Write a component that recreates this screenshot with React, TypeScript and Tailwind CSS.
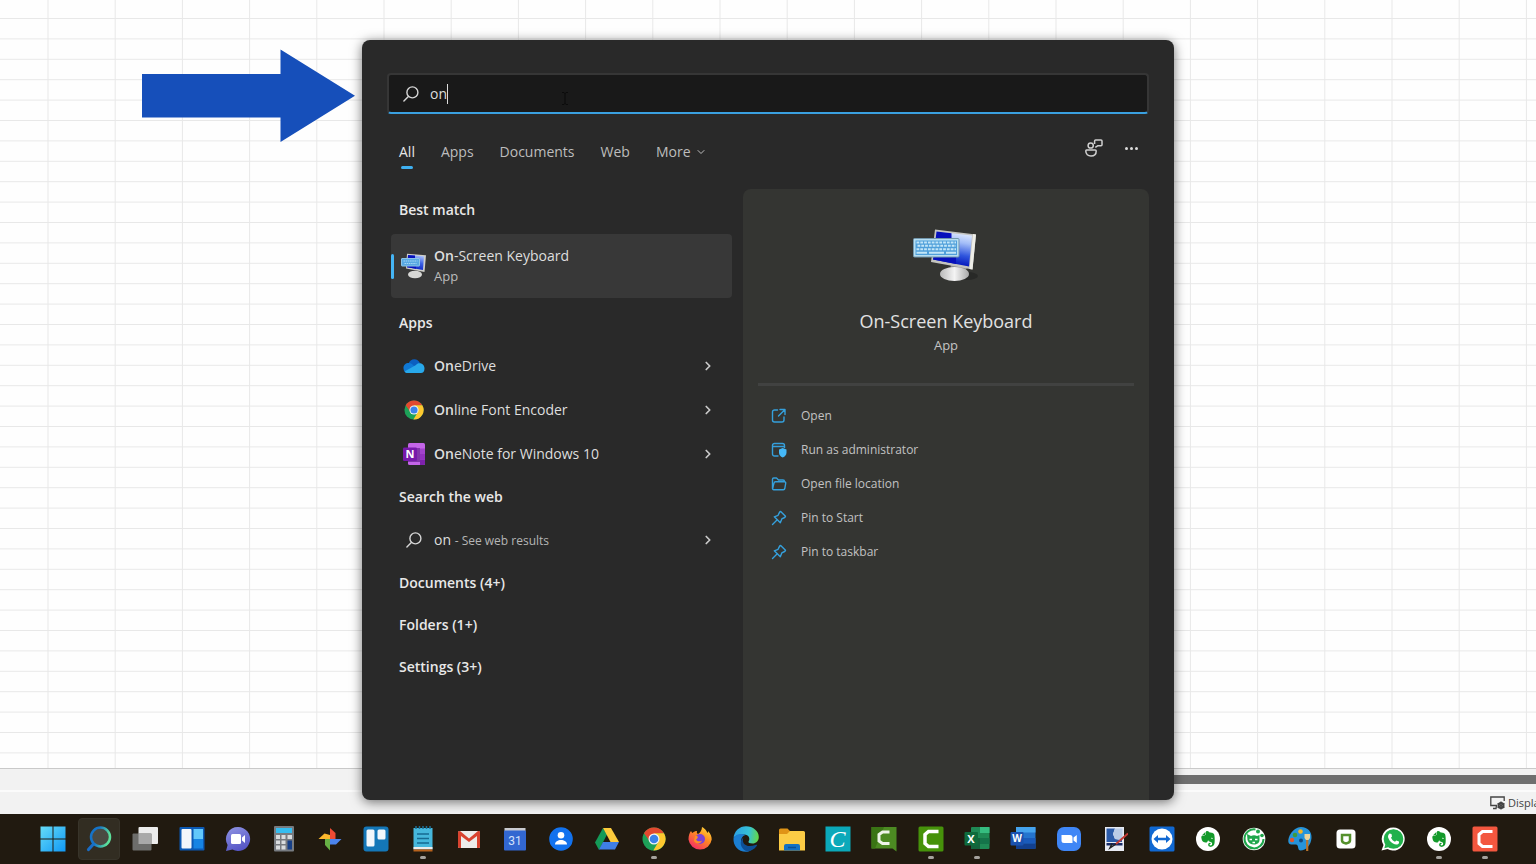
import { useState } from 'react';
import type { ReactNode } from 'react';
import { ChevronDown, ChevronRight } from 'lucide-react';
import { FaEvernote, FaWhatsapp } from 'react-icons/fa';

/* ---------- Small line icons ---------- */

function SearchIcon() {
  return (
    <svg width="16" height="16" viewBox="0 0 16 16" fill="none" stroke="#d6d6d6" strokeWidth="1.4" strokeLinecap="round">
      <circle cx="9.4" cy="6.4" r="5.5" />
      <path d="M5.4 10.4 L0.9 15" />
    </svg>
  );
}

function ChatPersonIcon() {
  return (
    <svg width="18" height="18" viewBox="0 0 18 18" fill="none" stroke="#d0d0d0" strokeWidth="1.5" strokeLinejoin="round">
      <circle cx="5.7" cy="6.5" r="2.6" />
      <path d="M1.6 11 H10.2 a1 1 0 0 1 1 1 C11.2 15.300 9 17 6 17 C3 17 .8 15.300 .8 12 a1 1 0 0 1 .8 -1Z" />
      <path d="M9.600 5 V2 a1 1 0 0 1 1 -1 H16 a1 1 0 0 1 1 1 V5.800 a1 1 0 0 1 -1 1 H12.600 L10.300 8.300" />
    </svg>
  );
}

function OpenIcon() {
  return (
    <svg width="16" height="16" viewBox="0 0 16 16" fill="none" stroke="#35a0dc" strokeWidth="1.4" strokeLinecap="round" strokeLinejoin="round">
      <path d="M6.500 2 H3.500 a2 2 0 0 0 -2 2 V12 a2 2 0 0 0 2 2 H11 a2 2 0 0 0 2 -2 V9" />
      <path d="M9 1.500 H14 V6.500 M13.800 1.700 L7.500 8" />
    </svg>
  );
}

function AdminIcon() {
  return (
    <svg width="16" height="16" viewBox="0 0 16 16" fill="none" stroke="#35a0dc" strokeWidth="1.4">
      <path d="M7.500 14 H3.500 a2 2 0 0 1 -2 -2 V3.500 a2 2 0 0 1 2 -2 H11.500 a2 2 0 0 1 2 2 V6 M1.500 4.500 H13.500" />
      <path d="M11.700 6 L15.500 7.500 V10.500 C15.500 13 14 14.600 11.700 15.500 C9.400 14.600 8 13 8 10.500 V7.500Z" fill="#45b8f8" stroke="none" />
    </svg>
  );
}

function FolderIcon() {
  return (
    <svg width="16" height="16" viewBox="0 0 16 16" fill="none" stroke="#35a0dc" strokeWidth="1.4" strokeLinejoin="round">
      <path d="M1.500 12.500 V3.200 a1.200 1.200 0 0 1 1.200 -1.200 H5.500 L7.500 4 H12 a1.500 1.500 0 0 1 1.500 1.500" />
      <path d="M4.500 5.800 H13.500 a1.200 1.200 0 0 1 1.200 1.500 L13.800 12.500 a1.500 1.500 0 0 1 -1.500 1.200 H2.800 a1.200 1.200 0 0 1 -1.200 -1.500 L3 7 a1.500 1.500 0 0 1 1.500 -1.200Z" />
    </svg>
  );
}

function PinIcon() {
  return (
    <svg width="16" height="16" viewBox="0 0 16 16" fill="none" stroke="#35a0dc" strokeWidth="1.4" strokeLinecap="round" strokeLinejoin="round">
      <path d="M9.700 1.500 L14.500 6.300 C14.500 7 14.200 7.200 13.600 7.500 L10.800 8.900 L9.300 12.800 L3.300 6.800 L7.100 5.300 L8.500 2.400 C8.800 1.800 9.100 1.500 9.700 1.500Z" />
      <path d="M6 10 L1.500 14.500" />
    </svg>
  );
}

/* ---------- App logos ---------- */

function KeyboardAppIcon() {
  return (
    <svg className="h-[54px] w-[66px]" viewBox="0 0 66 54">
      <defs>
        <linearGradient id="screen" x1="0.700" y1="0" x2="0.500" y2="1">
          <stop offset="0" stopColor="#e6efff" />
          <stop offset="0.300" stopColor="#a3bdf8" />
          <stop offset="0.650" stopColor="#2f55dd" />
          <stop offset="0.900" stopColor="#0a1fc0" />
        </linearGradient>
        <linearGradient id="base" x1="0" y1="0" x2="1" y2="0">
          <stop offset="0" stopColor="#b9b9b9" />
          <stop offset="0.500" stopColor="#f4f4f4" />
          <stop offset="1" stopColor="#a8a8a8" />
        </linearGradient>
      </defs>
      <ellipse cx="54" cy="47" rx="11" ry="4" fill="#1f1f1f" opacity="0.550" />
      <path d="M38 34 L54 38 L52 44 H37Z" fill="#8f9090" />
      <ellipse cx="41.500" cy="45" rx="14.500" ry="7" fill="url(#base)" />
      <path d="M22 .5 L63 5.500 L59.500 40.500 L18 33Z" fill="#c4c4c0" />
      <path d="M60 5 L63 5.500 L59.500 40.500 L56.500 39.900Z" fill="#eeeee8" />
      <path d="M23.500 2.500 L59 6.500 L56 37.500 L20 30.500Z" fill="url(#screen)" />
      <path d="M23.500 2.500 L38.500 4.300 V11 H22.500Z M21 28 H43 V34.900 L20 30.500Z" fill="#0710bb" />
      <rect x="0.500" y="9.500" width="45.500" height="18.500" rx="1" fill="#b6def2" stroke="#7297ad" />
      <rect x="2.500" y="11.500" width="41.500" height="14.500" fill="#4f9fda" />
      <path d="M3.500 13.500 H43 M4.500 16.800 H43 M3.500 20.200 H43" stroke="#c3e6f8" strokeWidth="2" strokeDasharray="2.800 1" />
      <path d="M3.500 23.700 H14 M16 23.700 H31 M33 23.700 H43" stroke="#c3e6f8" strokeWidth="2" />
    </svg>
  );
}

function KeyboardAppIconSmall() {
  return (
    <svg width="26" height="26" viewBox="0 0 26 26">
      <defs>
        <linearGradient id="screen-small" x1="0.800" y1="0" x2="0.500" y2="1">
          <stop offset="0" stopColor="#b4caff" />
          <stop offset="0.500" stopColor="#3c62e6" />
          <stop offset="1" stopColor="#0a1fc0" />
        </linearGradient>
      </defs>
      <ellipse cx="14" cy="21.500" rx="7" ry="3.800" fill="#d8d8d6" />
      <path d="M6 .8 L25 2.200 L23.500 19 L5 15.500Z" fill="#cfcfca" />
      <path d="M7 2 L23 3.300 L22 17 L6 14.300Z" fill="url(#screen-small)" />
      <path d="M7 2 L14 2.600 V5.500 H6.800Z M7 12 H15 V15.800 L6 14.300Z" fill="#0710bb" />
      <rect x="0.500" y="5.500" width="18" height="7.500" rx="0.500" fill="#58a8e2" stroke="#8cc4e6" />
      <path d="M2.500 8 H16.500 M3.500 10.500 H15.500" stroke="#a5d6f4" strokeDasharray="1.500 0.700" />
    </svg>
  );
}

function OneDriveIcon() {
  return (
    <svg width="22" height="22" viewBox="0 0 22 22">
      <path d="M5.500 9 C6.500 3.500 14.500 2 17 8 L13 13 L4 10Z" fill="#0b5fc0" />
      <path d="M.5 13.500 C0 8.500 5.500 6.500 9 9 L15 15 L4.500 18 C2.500 18 .5 16 .5 13.500Z" fill="#0f78d4" />
      <path d="M13 10 C15 7 21.500 8 21.500 13.500 C21.500 16.500 20 18 18 18 H4.500 C3.500 18 2.400 17.500 1.500 16.500Z" fill="#28a8ea" />
    </svg>
  );
}

function ChromeIcon({ className }: { className: string }) {
  return (
    <svg className={className} viewBox="0 0 24 24">
      <circle cx="12" cy="12" r="11.500" fill="#1da158" />
      <path d="M2 6.300 A11.500 11.500 0 0 1 22 6.300 L12 7 L7.500 14Z" fill="#e2492f" />
      <path d="M22 6.300 A11.500 11.500 0 0 1 11.300 23.500 L16.600 14.500 L12 6.300Z" fill="#fdc82f" />
      <circle cx="12" cy="12" r="5.500" fill="#f5f5f5" />
      <circle cx="12" cy="12" r="4.300" fill="#3b82ea" />
    </svg>
  );
}

function OneNoteIcon() {
  return (
    <svg width="22" height="22" viewBox="0 0 22 22">
      <rect x="5" y="0" width="17" height="22" rx="1.500" fill="#c465e8" />
      <rect x="17" y="5.500" width="5" height="5.500" fill="#a343cc" />
      <rect x="17" y="11" width="5" height="5.500" fill="#9332bf" />
      <path d="M17 16.500 H22 V20.500 a1.500 1.500 0 0 1 -1.500 1.500 H17Z" fill="#7e22ac" />
      <rect x="5" y="5" width="12" height="14" fill="#571580" opacity="0.600" />
      <rect x="0" y="4.500" width="14" height="13.500" rx="1.300" fill="#7719aa" />
      <text x="7" y="15" textAnchor="middle" fontSize="11" fontWeight="700" fontFamily="Open Sans, sans-serif" fill="#fff">N</text>
    </svg>
  );
}

function Glyph({ children }: { children: ReactNode }) {
  return (
    <svg width="26" height="26" viewBox="0 0 26 26">
      {children}
    </svg>
  );
}

function EvernoteBadge() {
  return (
    <span className="flex h-6 w-6 items-center justify-center rounded-full bg-white">
      <FaEvernote size={18} color="#149a2b" />
    </span>
  );
}

interface TaskbarApp {
  name: string;
  icon: ReactNode;
  active?: boolean;
  running?: boolean;
}

const taskbarApps: TaskbarApp[] = [
  {
    name: 'Start',
    icon: (
      <Glyph>
        <defs>
          <linearGradient id="win" x1="0" y1="0" x2="1" y2="1">
            <stop offset="0" stopColor="#66dcf8" />
            <stop offset="1" stopColor="#1098f5" />
          </linearGradient>
        </defs>
        <path d="M.5 .5 H12.500 V12.500 H.5Z M13.500 .5 H25.500 V12.500 H13.500Z M.5 13.500 H12.500 V25.500 H.5Z M13.500 13.500 H25.500 V25.500 H13.500Z" fill="url(#win)" />
      </Glyph>
    ),
  },
  {
    name: 'Search',
    active: true,
    icon: (
      <Glyph>
        <defs>
          <linearGradient id="lens" x1="0" y1="0" x2="1" y2="0.300">
            <stop offset="0.400" stopColor="#1573c8" />
            <stop offset="1" stopColor="#5be09a" />
          </linearGradient>
        </defs>
        <path d="M8 17.500 L2.500 23.500" stroke="#1a6cc4" strokeWidth="3.200" strokeLinecap="round" />
        <circle cx="14.500" cy="11" r="9.500" fill="#4a4a42" stroke="url(#lens)" strokeWidth="2.500" />
      </Glyph>
    ),
  },
  {
    name: 'Task View',
    icon: (
      <Glyph>
        <rect x="6.500" y="1" width="19.500" height="17" rx="1" fill="#ececec" />
        <rect x="0.500" y="7.500" width="19" height="17" rx="1" fill="#6d6d6b" />
        <rect x="6.500" y="7.500" width="13" height="10.500" fill="#a9a9a9" />
      </Glyph>
    ),
  },
  {
    name: 'Widgets',
    icon: (
      <Glyph>
        <rect x="0.500" y="1" width="25" height="23.500" rx="1" fill="#0b59b5" />
        <rect x="2.500" y="3" width="10" height="19.500" rx="1" fill="#f4f7fb" />
        <rect x="14.500" y="3" width="9.500" height="10" fill="#62c8fb" />
        <rect x="14.500" y="13" width="9.500" height="9.500" fill="#1684e4" />
      </Glyph>
    ),
  },
  {
    name: 'Chat',
    icon: (
      <Glyph>
        <defs>
          <linearGradient id="chat" x1="0.300" y1="0" x2="0.700" y2="1">
            <stop offset="0" stopColor="#8a8ee0" />
            <stop offset="1" stopColor="#5251c4" />
          </linearGradient>
        </defs>
        <path d="M13 1 A12 12 0 1 1 7.500 23.600 L1 25 L2.600 19 A12 12 0 0 1 13 1Z" fill="url(#chat)" />
        <rect x="6" y="8" width="10" height="10" rx="1.500" fill="#fff" />
        <path d="M17 11.500 L20 9 V17 L17 14.500Z" fill="#fff" />
      </Glyph>
    ),
  },
  {
    name: 'Calculator',
    icon: (
      <Glyph>
        <rect x="3" y="0" width="20" height="25.500" rx="1" fill="#777b80" />
        <rect x="5" y="2" width="16" height="5" fill="#35bdf0" />
        <path d="M5 9 H9 V13 H5Z M10.500 9 H14.500 V13 H10.500Z M16.500 9 H21 V13 H16.500Z M5 14.500 H9 V18 H5Z M10.500 14.500 H14.500 V18 H10.500Z M5 19.500 H9 V23.500 H5Z M10.500 19.500 H14.500 V23.500 H10.500Z" fill="#d9dcde" />
        <rect x="16.500" y="14.500" width="4.500" height="9" fill="#163f87" />
      </Glyph>
    ),
  },
  {
    name: 'Photos',
    icon: (
      <Glyph>
        <path d="M13 13 V2 L18.500 7 V13Z" fill="#ee4b35" />
        <path d="M13 13 H24.500 L19 18.500 H13Z" fill="#4b84ee" />
        <path d="M13 13 V24.500 L8 19 V13Z" fill="#67b045" />
        <path d="M13 13 H1.500 L7.500 7.500 L13 9Z" fill="#fbb72c" />
      </Glyph>
    ),
  },
  {
    name: 'Trello',
    icon: (
      <Glyph>
        <rect x="0.500" y="0.500" width="25" height="25" rx="3" fill="#1477b8" />
        <rect x="3.500" y="3.500" width="8" height="17" rx="1.500" fill="#f2f7fb" />
        <rect x="14.500" y="3.500" width="8" height="10" rx="1.500" fill="#f2f7fb" />
      </Glyph>
    ),
  },
  {
    name: 'Notepad',
    running: true,
    icon: (
      <Glyph>
        <rect x="3.500" y="2" width="19" height="21" fill="#46b7dc" />
        <path d="M6 0 V3 M9.500 0 V3 M13 0 V3 M16.500 0 V3 M20 0 V3" stroke="#1b6f94" strokeWidth="1.500" />
        <path d="M7 8 H19 M7 12.500 H19 M7 17 H19" stroke="#166a91" strokeWidth="1.500" />
        <rect x="3.500" y="21" width="19" height="2.500" fill="#ececec" />
        <rect x="3.500" y="23.500" width="19" height="2" fill="#b8621c" />
      </Glyph>
    ),
  },
  {
    name: 'Gmail',
    icon: (
      <Glyph>
        <rect x="2" y="5" width="22" height="17" rx="1.500" fill="#ececea" />
        <path d="M2 7 V20.500 a1.500 1.500 0 0 0 1.500 1.500 H5 V10 L13 16 L21 10 V22 H22.500 a1.500 1.500 0 0 0 1.500 -1.500 V6.500 a1.500 1.500 0 0 0 -2 -1.500 L13 12.500 L4 5 a1.500 1.500 0 0 0 -2 1.500Z" fill="#d8432f" />
      </Glyph>
    ),
  },
  {
    name: 'Calendar',
    icon: (
      <Glyph>
        <rect x="2.500" y="2" width="21" height="4" fill="#c9cbd0" />
        <rect x="2" y="4.500" width="22" height="20" rx="1" fill="#3267d1" />
        <text x="13" y="19" textAnchor="middle" fontSize="12" fontFamily="Roboto, sans-serif" fill="#d5e2fb">31</text>
      </Glyph>
    ),
  },
  {
    name: 'Contacts',
    icon: (
      <Glyph>
        <circle cx="13" cy="13" r="11.800" fill="#1272ee" />
        <circle cx="13" cy="9.300" r="3.300" fill="#fff" />
        <path d="M7 18.500 C7 12.500 19 12.500 19 18.500Z" fill="#fff" />
      </Glyph>
    ),
  },
  {
    name: 'Drive',
    icon: (
      <Glyph>
        <path d="M9 2 L13 8.500 L5 24 L1 16.500Z" fill="#149a58" />
        <path d="M9 2 H17 L25 16 H16.500Z" fill="#fccb3c" />
        <path d="M9 16 H25 L21 23.500 H5Z" fill="#3f7fe6" />
      </Glyph>
    ),
  },
  { name: 'Chrome', running: true, icon: <ChromeIcon className="h-6 w-6" /> },
  {
    name: 'Firefox',
    icon: (
      <Glyph>
        <defs>
          <linearGradient id="fox" x1="0.900" y1="0" x2="0.200" y2="1">
            <stop offset="0" stopColor="#ffe03d" />
            <stop offset="0.450" stopColor="#ff8a22" />
            <stop offset="1" stopColor="#f5266a" />
          </linearGradient>
        </defs>
        <path d="M15 1 C19 3 20 6 20.500 7 C21 6.500 21 6 21 5 C24 8 24.700 11 24.700 13.500 A11.700 11.500 0 0 1 1.500 13.500 C1.500 9.500 2.500 7 4 5 C4.500 6 5 6.500 5.500 7 C7 5.500 8.500 5 10 5 C9.500 6.500 10 7.500 11 8 C13 7 15 4 15 1Z" fill="url(#fox)" />
        <circle cx="13" cy="13" r="5" fill="#7b43d6" />
        <path d="M8 10 C11 9 12 12 9 13.500 C10 15.500 13 16 15 14.500 C14 18 9 18.500 7 15Z" fill="#ff8f25" />
      </Glyph>
    ),
  },
  {
    name: 'Edge',
    icon: (
      <Glyph>
        <defs>
          <linearGradient id="edge" x1="0" y1="0.300" x2="1" y2="0.400">
            <stop offset="0" stopColor="#2d9fe3" />
            <stop offset="0.600" stopColor="#35c1d8" />
            <stop offset="1" stopColor="#63d948" />
          </linearGradient>
        </defs>
        <path d="M.5 12.500 C1 5 6.500 .2 13 .2 C20 .2 25.800 5 25.800 11 C25.800 15 23 17.500 19.500 17.500 C16.500 17.500 15 16.500 15.500 15.500 C17.500 13 16 8.500 11 8.500 C6 8.500 1 10 .5 12.500Z" fill="url(#edge)" />
        <path d="M.5 12.500 C2 8 9 7 12.500 9 C9 10 7.500 13 8.500 17 C9.500 21.500 14 24.500 18 24.500 C16 25.500 14.500 25.800 13 25.800 C5 25.800 0 19.500 .5 12.500Z" fill="#1b7ed2" />
        <path d="M10.500 11.500 C8 17 13 22.500 22.500 19 C24 18.500 24.300 19 23.700 20 C21 24 16 26 13 25 C7 22 6 15 10.500 11.500Z" fill="#0d4f96" />
      </Glyph>
    ),
  },
  {
    name: 'File Explorer',
    icon: (
      <Glyph>
        <path d="M0 4 a1.500 1.500 0 0 1 1.500 -1.500 H8.500 L11 5 H17 V9 H0Z" fill="#e09416" />
        <path d="M0 8 H8 L11 5 H24.500 a1.500 1.500 0 0 1 1.500 1.500 V24.500 H0Z" fill="#fccc45" />
        <path d="M5 24.500 V20 a2 2 0 0 1 2 -2 H19 a2 2 0 0 1 2 2 V24.500Z" fill="#1471c4" />
        <path d="M9 21.500 H17" stroke="#0b4f94" strokeWidth="1.500" />
      </Glyph>
    ),
  },
  {
    name: 'Cricut',
    icon: (
      <Glyph>
        <rect x="0.500" y="0.500" width="25" height="25" fill="#0ba9ba" />
        <text x="12.500" y="21" textAnchor="middle" fontSize="24" fontStyle="italic" fontFamily="Liberation Serif, serif" fill="#fff">C</text>
      </Glyph>
    ),
  },
  {
    name: 'Camtasia 9',
    icon: (
      <Glyph>
        <path d="M.5 1 H25.500 V25.500 L21.500 22.500 H.5Z" fill="#4c8a22" />
        <path d="M.5 1 H13 L4 22.500 H.5Z" fill="#3a7414" />
        <path d="M18.500 6 H11.500 L8 8.500 V15 L11.500 17.500 H18.500" fill="none" stroke="#eef4e8" strokeWidth="3" />
      </Glyph>
    ),
  },
  {
    name: 'Camtasia',
    running: true,
    icon: (
      <Glyph>
        <rect x="0.500" y="0.500" width="25" height="25" rx="1.500" fill="#46920a" />
        <path d="M20.500 5.500 H10.500 L7 8.500 V17.500 L10.500 20.500 H20.500" fill="none" stroke="#fff" strokeWidth="3.500" />
      </Glyph>
    ),
  },
  {
    name: 'Excel',
    running: true,
    icon: (
      <Glyph>
        <rect x="7" y="1" width="18.500" height="22" rx="1" fill="#1f8a55" />
        <path d="M16 1 H25.500 V7 H16Z" fill="#36bd80" />
        <path d="M7 12 H16 V23 H7Z" fill="#14633c" />
        <path d="M16 12 H25.500 V18 H16Z" fill="#15744a" />
        <rect x="0.500" y="6" width="13.500" height="13.500" rx="1" fill="#0f6b3c" />
        <text x="7" y="17" textAnchor="middle" fontSize="11" fontWeight="700" fontFamily="Open Sans, sans-serif" fill="#fff">X</text>
      </Glyph>
    ),
  },
  {
    name: 'Word',
    icon: (
      <Glyph>
        <rect x="6" y="1" width="19.500" height="22" rx="1" fill="#2474ce" />
        <path d="M6 1 H25.500 V6.500 H6Z" fill="#45a3ed" />
        <path d="M6 12 H25.500 V17.500 H6Z" fill="#1a5bbb" />
        <path d="M6 17.500 H25.500 V23 H6Z" fill="#12408f" />
        <rect x="0.500" y="6" width="13" height="13.500" rx="1" fill="#1a52b0" />
        <text x="7" y="16" textAnchor="middle" fontSize="10" fontWeight="700" fontFamily="Open Sans, sans-serif" fill="#fff">W</text>
      </Glyph>
    ),
  },
  {
    name: 'Zoom',
    icon: (
      <Glyph>
        <rect x="1" y="1" width="24" height="24" rx="7" fill="#3f86f6" />
        <path d="M5.500 9 H14 a2.500 2.500 0 0 1 2.500 2.500 V17 H8 a2.500 2.500 0 0 1 -2.500 -2.500Z M17.500 11.500 L20.800 9 V17 L17.500 14.500Z" fill="#fff" />
      </Glyph>
    ),
  },
  {
    name: 'Photo Editor',
    icon: (
      <Glyph>
        <rect x="3" y="1" width="19" height="24" fill="#e7eaf2" />
        <path d="M4.500 2.500 H13 L11 8 L13 13 L20 14 V16 H4.500Z" fill="#2b5ba9" />
        <path d="M13 2.500 H20.500 V14 L13 13 L11 8Z" fill="#b9cbe6" />
        <path d="M4.500 17 H20.500 V19.500 H4.500Z" fill="#162a66" />
        <path d="M26 7.500 L14 18" stroke="#c33a34" strokeWidth="2" />
        <path d="M14 18 L8 22 L10 17.500" fill="none" stroke="#222" strokeWidth="1.500" />
      </Glyph>
    ),
  },
  {
    name: 'TeamViewer',
    icon: (
      <Glyph>
        <rect x="0.500" y="0.500" width="25" height="25" rx="1.500" fill="#1068d2" />
        <circle cx="13" cy="13" r="10.500" fill="#fff" />
        <path d="M4.500 13 L9 9 V11.800 H17 V9 L21.500 13 L17 17 V14.200 H9 V17Z" fill="#1068d2" />
      </Glyph>
    ),
  },
  { name: 'Evernote', icon: <EvernoteBadge /> },
  {
    name: 'Cookie',
    icon: (
      <Glyph>
        <circle cx="13" cy="13" r="11.300" fill="#fff" />
        <path d="M14.500 3.500 A9.500 9.500 0 1 0 22.500 13" fill="none" stroke="#1ea64b" strokeWidth="2" />
        <path d="M6 8 L10 10 C12 9 14 9 16 10 L18.500 9 V14 C18.500 20 8 20 6.500 14Z" fill="#1ea64b" />
        <path d="M8.500 13.500 H11 M14 13.500 H16.500 M11.500 16.500 H14" stroke="#fff" strokeWidth="1.300" />
        <circle cx="17" cy="5.500" r="2" fill="#1ea64b" />
        <circle cx="21" cy="9.500" r="1.800" fill="#1ea64b" />
      </Glyph>
    ),
  },
  {
    name: 'Paint',
    icon: (
      <Glyph>
        <path d="M14 1 C21 1 25 6 24.500 12 C24 19 19 24.500 13.500 24.500 C11 24.500 11.500 21.500 10.500 19.500 C9.500 17.500 7 19 4 18.500 C0 18 1 12 3.500 8 C6 4 10 1 14 1Z" fill="#2694da" />
        <circle cx="8" cy="9" r="2.300" fill="#3f9a3d" />
        <circle cx="13.500" cy="5.500" r="2.300" fill="#f5b524" />
        <circle cx="5" cy="14" r="2.200" fill="#e3552c" />
        <circle cx="14" cy="14.500" r="2" fill="#134a80" />
        <path d="M17.500 8 H23 V12 L21.500 14 H19 L17.500 12Z" fill="#ecd39a" />
        <path d="M20.200 14 V25" stroke="#b9742b" strokeWidth="2.200" />
      </Glyph>
    ),
  },
  {
    name: 'Shield',
    icon: (
      <Glyph>
        <rect x="3.500" y="3.500" width="19" height="19" rx="3.500" fill="#fff" />
        <path d="M9 9 H17 V14.500 C17 16 15.500 17 13 17.500 C10.500 17 9 16 9 14.500Z" fill="none" stroke="#55902c" strokeWidth="2.500" />
      </Glyph>
    ),
  },
  {
    name: 'WhatsApp',
    icon: (
      <Glyph>
        <path d="M13.500 1.500 A11.500 11.500 0 1 1 7.500 23 L1.500 24.500 L3.500 19 A11.500 11.500 0 0 1 13.500 1.500Z" fill="#fff" />
        <circle cx="13.500" cy="13" r="9.800" fill="#22b14c" />
        <FaWhatsapp x="3" y="2.500" size={21} color="#22b14c" />
        <path d="M9.500 7.500 L11.500 8 L12 10.500 L11 11.800 C12 13.800 13 14.800 15 15.800 L16.300 14.500 L19 15.500 V17 C18 19 15.500 19 13 17.500 C10.500 16 8.500 13.500 8 11 C8 9.500 8.500 8.200 9.500 7.500Z" fill="#fff" />
      </Glyph>
    ),
  },
  { name: 'Evernote Helper', running: true, icon: <EvernoteBadge /> },
  {
    name: 'Camtasia Recorder',
    running: true,
    icon: (
      <Glyph>
        <rect x="0.500" y="0.500" width="25" height="25" rx="1.500" fill="#f3573f" />
        <path d="M20.500 5.500 H10.500 L7 8.500 V17.500 L10.500 20.500 H20.500" fill="none" stroke="#fff" strokeWidth="3" />
      </Glyph>
    ),
  },
];

/* ---------- Search results ---------- */

const tabs = ['All', 'Apps', 'Documents', 'Web'];

const appResults = [
  { match: 'On', rest: 'eDrive', icon: <OneDriveIcon /> },
  { match: 'On', rest: 'line Font Encoder', icon: <ChromeIcon className="h-5 w-5" /> },
  { match: 'On', rest: 'eNote for Windows 10', icon: <OneNoteIcon /> },
];

const moreGroups = ['Documents (4+)', 'Folders (1+)', 'Settings (3+)'];

const actions = [
  { label: 'Open', icon: <OpenIcon /> },
  { label: 'Run as administrator', icon: <AdminIcon /> },
  { label: 'Open file location', icon: <FolderIcon /> },
  { label: 'Pin to Start', icon: <PinIcon /> },
  { label: 'Pin to taskbar', icon: <PinIcon /> },
];

function GroupHeading({ children }: { children: ReactNode }) {
  return <h2 className="flex h-[42px] items-center pl-2 text-sm font-semibold text-[#e8e8e8]">{children}</h2>;
}

function ResultRow({ icon, children }: { icon: ReactNode; children: ReactNode }) {
  return (
    <button className="flex h-11 w-full items-center pr-[17px] pl-3 text-left text-sm font-medium text-[#dedede]">
      <span className="mr-[9px] flex w-[22px] shrink-0 justify-center">{icon}</span>
      <span className="flex-1">{children}</span>
      <ChevronRight size={14} strokeWidth={3} color="#c9c9c9" />
    </button>
  );
}

function SearchPanel() {
  const [query, setQuery] = useState('on');
  const [tab, setTab] = useState('All');

  return (
    <section className="absolute top-10 bottom-16 left-1/2 flex w-[812px] -translate-x-1/2 flex-col rounded-lg bg-[#292929] px-[25px] pt-[33px] shadow-[0_2px_12px_rgba(0,0,0,0.55)]">
      {/* Callout arrow */}
      <svg className="absolute top-[9px] right-full mr-[7px]" width="213" height="93" viewBox="0 0 213 93">
        <path d="M0 25 H138.500 V.5 L213 46.700 L138.500 93 V68.500 H0Z" fill="#164fba" />
      </svg>

      {/* Search box */}
      <label className="relative flex h-[41px] shrink-0 items-center rounded border-2 border-[#363636] border-b-[#3aa0e0] bg-[#191919] pl-[14px]">
        <SearchIcon />
        <input
          type="text"
          aria-label="Search"
          value={query}
          onChange={(e) => setQuery(e.target.value)}
          className="ml-[11px] field-sizing-content bg-transparent text-sm font-medium text-[#dcdcdc] outline-none"
        />
        <span className="h-5 w-px bg-[#dcdcdc]" />
        <svg className="absolute top-[17px] left-[172px]" width="8" height="13" viewBox="0 0 8 13" fill="none" stroke="#0b0b0b">
          <path d="M1 .5 H3 L4 1.500 L5 .5 H7 M4 1.500 V11.500 M1 12.500 H3 L4 11.500 L5 12.500 H7" />
        </svg>
      </label>

      {/* Filter tabs */}
      <div className="flex h-[75px] shrink-0 items-start justify-between pr-[11px] pl-3">
        <nav className="flex gap-[26px] pt-7 text-sm font-medium text-[#bdbdbd]">
          {tabs.map((name) => (
            <button
              key={name}
              onClick={() => setTab(name)}
              className={`flex flex-col items-center ${name === tab ? 'text-[#e6e6e6]' : ''}`}
            >
              {name}
              {name === tab && <span className="mt-1 h-[3px] w-3 rounded-full bg-[#3fb0f0]" />}
            </button>
          ))}
          <button className="flex h-5 items-center gap-1">
            More
            <ChevronDown size={12} />
          </button>
        </nav>
        <div className="flex items-center gap-[22px] pt-[25px]">
          <button aria-label="Chat">
            <ChatPersonIcon />
          </button>
          <button aria-label="Options" className="flex gap-[2px]">
            <span className="h-[3px] w-[3px] rounded-full bg-[#dcdcdc]" />
            <span className="h-[3px] w-[3px] rounded-full bg-[#dcdcdc]" />
            <span className="h-[3px] w-[3px] rounded-full bg-[#dcdcdc]" />
          </button>
        </div>
      </div>

      <div className="flex min-h-0 flex-1 gap-[11px]">
        {/* Results */}
        <div className="w-[345px] pl-1">
          <GroupHeading>Best match</GroupHeading>
          <button className="mt-[3px] mb-1 flex h-16 w-full items-center gap-[7px] rounded bg-[#383838] text-left font-medium">
            <span className="h-[25px] w-[3px] rounded-full bg-[#45b5f5]" />
            <KeyboardAppIconSmall />
            <span>
              <span className="block text-sm leading-5 text-[#dedede]">
                <b className="font-semibold">On</b>-Screen Keyboard
              </span>
              <span className="block text-[13px] leading-5 text-[#bdbdbd]">App</span>
            </span>
          </button>

          <GroupHeading>Apps</GroupHeading>
          {appResults.map((app) => (
            <ResultRow key={app.rest} icon={app.icon}>
              <b className="font-semibold">{app.match}</b>
              {app.rest}
            </ResultRow>
          ))}

          <GroupHeading>Search the web</GroupHeading>
          <ResultRow icon={<SearchIcon />}>
            on <span className="text-xs text-[#b5b5b5]">- See web results</span>
          </ResultRow>

          {moreGroups.map((group) => (
            <GroupHeading key={group}>{group}</GroupHeading>
          ))}
        </div>

        {/* Details */}
        <div className="flex-1 rounded-t-lg bg-[#343532] px-[15px] pt-10">
          <div className="flex flex-col items-center font-medium">
            <KeyboardAppIcon />
            <h1 className="mt-6 text-lg leading-7 text-[#e2e2e2]">On-Screen Keyboard</h1>
            <p className="text-[13px] leading-5 text-[#c4c4c4]">App</p>
          </div>
          <hr className="mt-7 mb-[13px] border-t-3 border-[#414241]" />
          {actions.map((action) => (
            <button key={action.label} className="flex h-[34px] w-full items-center gap-[14px] pl-[13px] text-xs font-medium text-[#c2c2c2]">
              {action.icon}
              {action.label}
            </button>
          ))}
        </div>
      </div>
    </section>
  );
}

/* ---------- Desktop ---------- */

function Spreadsheet() {
  return (
    <svg className="min-h-0 w-full flex-1 bg-[#fefefe]" aria-hidden="true">
      <defs>
        <pattern id="cells" x="47.500" y="18" width="67.200" height="20.400" patternUnits="userSpaceOnUse">
          <path d="M0 .5 H67.200 M.5 0 V20.400" stroke="#e8e8e8" />
        </pattern>
      </defs>
      <rect width="100%" height="100%" fill="url(#cells)" />
    </svg>
  );
}

function StatusBar() {
  return (
    <footer className="h-[46px] shrink-0 overflow-hidden border-t border-[#c9c9c9] bg-[#f2f2f2] pt-[6px]">
      <div className="ml-auto h-[9px] w-1/2 bg-[#6e6e6e]" />
      <div className="mt-[6px] h-[2px] bg-[#fbfbfb]" />
      <div className="flex h-[22px] justify-end">
        <button className="flex w-[46px] items-center gap-[3px] overflow-hidden text-[11px] whitespace-nowrap text-[#444]">
          <svg className="shrink-0" width="15" height="14" viewBox="0 0 15 14" fill="none" stroke="#444" strokeWidth="1.300">
            <path d="M7 9.500 H.8 V1 H14.200 V5 M3 12.500 H6 L6.500 9.500" />
            <circle cx="11" cy="9.500" r="2.500" strokeWidth="2" />
            <path d="M11 5.500 V13.500 M7.500 7.500 L14.500 11.500 M7.500 11.500 L14.500 7.500" />
          </svg>
          Display
        </button>
      </div>
    </footer>
  );
}

function Taskbar() {
  return (
    <nav className="flex h-[50px] shrink-0 items-stretch bg-[#211a10] pr-7 pl-[30px]">
      {taskbarApps.map((app) => (
        <button key={app.name} aria-label={app.name} className="relative flex flex-1 items-center justify-center">
          <span
            className={`flex h-[42px] w-[42px] items-center justify-center rounded ${
              app.active ? 'border border-[#38342a] bg-[#322d22]' : ''
            }`}
          >
            {app.icon}
          </span>
          {app.running && (
            <span className="absolute bottom-[5px] left-1/2 h-[3px] w-[6px] -translate-x-1/2 rounded-full bg-[#a5a29d]" />
          )}
        </button>
      ))}
    </nav>
  );
}

export default function App() {
  return (
    <main className="relative flex h-screen flex-col overflow-hidden font-['Open_Sans','Noto_Sans',sans-serif]">
      <Spreadsheet />
      <StatusBar />
      <Taskbar />
      <SearchPanel />
    </main>
  );
}
